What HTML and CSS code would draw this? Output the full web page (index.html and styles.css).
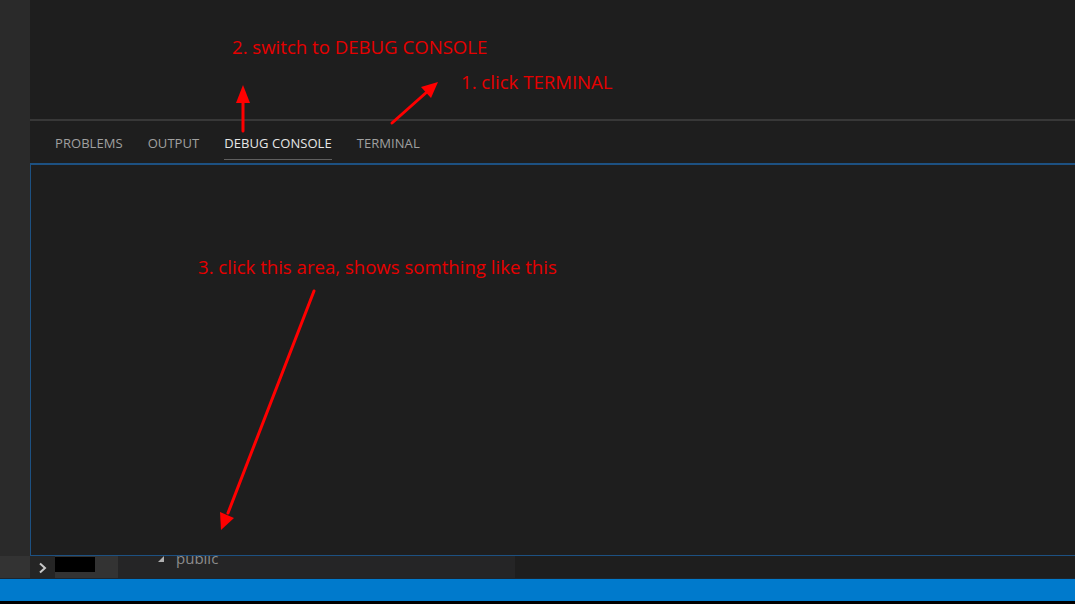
FILE: index.html
```html
<!DOCTYPE html>
<html>
<head>
    <link rel="stylesheet" href="styles.css">
</head>
<body>
    <div class="workbench">
        <div class="main">
            <div class="activitybar"></div>
            <div class="content">
                <div class="editor"></div>
                <div class="panel">
                    <div class="panel-tabs">
                        <span class="tab">Problems</span>
                        <span class="tab">Output</span>
                        <span class="tab active">Debug Console</span>
                        <span class="tab">Terminal</span>
                    </div>
                    <div class="debug-console"></div>
                </div>
            </div>
        </div>

        <div class="bottom-row">
            <div class="side-strip"></div>
            <div class="toggle">
                <svg width="10" height="12" viewBox="0 0 10 12">
                    <polyline points="2,1.5 7,6 2,10.5" fill="none" stroke="#c8c8c8" stroke-width="2"/>
                </svg>
            </div>
            <div class="tool-block"><div class="black-box"></div></div>
            <div class="explorer">
                <svg class="twisty" width="6" height="6" viewBox="0 0 6 6">
                    <polygon points="6,0 6,6 0,6" fill="#b0b0b0"/>
                </svg>
                <span class="folder">public</span>
            </div>
            <div class="rest"></div>
        </div>

        <div class="statusbar"></div>
        <div class="taskbar"></div>

        <!-- notes drawn over the screenshot -->
        <div class="note note-switch">2. switch to DEBUG CONSOLE</div>
        <div class="note note-terminal">1. click TERMINAL</div>
        <div class="note note-area">3. click this area, shows somthing like this</div>

        <svg class="arrows" width="1075" height="604" viewBox="0 0 1075 604">
            <g stroke="#f00" stroke-width="3" stroke-linecap="round" fill="#f00">
                <line x1="243" y1="131" x2="243" y2="98"/>
                <polygon points="243,85 250,103 236,103" stroke="none"/>

                <line x1="392" y1="123" x2="428" y2="91"/>
                <polygon points="438,82 431,98 421,87" stroke="none"/>

                <line x1="314" y1="291" x2="228" y2="513"/>
                <polygon points="221,530 234,518 220,512" stroke="none"/>
            </g>
        </svg>
    </div>
</body>
</html>
```

FILE: styles.css
```css
body {
    margin: 0;
    padding: 0;
    background-color: #1e1e1e;
    font-family: 'Open Sans', 'Noto Sans', sans-serif;
    overflow: hidden;
}
.workbench {
    position: relative;
    width: 1075px;
    height: 604px;
    display: flex;
    flex-direction: column;
}
.main {
    height: 556px;
    display: flex;
}
.activitybar {
    width: 30px;
    background-color: #2a2a2a;
}
.content {
    flex: 1;
    display: flex;
    flex-direction: column;
    background-color: #1e1e1e;
}
.editor {
    height: 119px;
}
.panel {
    flex: 1;
    display: flex;
    flex-direction: column;
    border-top: 2px solid #383838;
}
.panel-tabs {
    height: 42px;
    display: flex;
    align-items: flex-start;
    gap: 25px;
    padding-left: 25px;
}
.tab {
    padding-top: 13px;
    padding-bottom: 7px;
    line-height: 18px;
    font-size: 13px;
    letter-spacing: 0.06px;
    text-transform: uppercase;
    color: #a0a0a0;
    border-bottom: 1px solid transparent;
}
.tab.active {
    color: #e6e6e6;
    border-bottom-color: #5f5f5f;
}
.debug-console {
    flex: 1;
    border: 1px solid #1d5182;
    border-top-width: 2px;
    border-right: none;
}
.bottom-row {
    height: 22px;
    display: flex;
    overflow: hidden;
    border-bottom: 1px solid #1b2530;
}
.side-strip {
    width: 30px;
    background-color: #333333;
}
.toggle {
    width: 25px;
    background-color: #252525;
    display: flex;
    justify-content: center;
    padding-top: 6px;
    box-sizing: border-box;
}
.tool-block {
    width: 63px;
    background-color: #333333;
    padding-top: 1px;
}
.black-box {
    width: 40px;
    height: 15px;
    background-color: #000;
}
.explorer {
    width: 397px;
    background-color: #252526;
    display: flex;
    align-items: flex-start;
    padding-left: 40px;
    box-sizing: border-box;
}
.twisty {
    margin-right: 12px;
}
.folder {
    margin-top: -8px;
    font-size: 15px;
    line-height: 20px;
    color: #8c8c8c;
}
.rest {
    flex: 1;
    background-color: #1e1e1e;
}
.statusbar {
    height: 22px;
    background-color: #007acc;
}
.taskbar {
    flex: 1;
    background-color: #000;
}
.note {
    position: absolute;
    font-size: 18.6px;
    line-height: 18px;
    color: #e60000;
    white-space: nowrap;
}
.note-switch {
    left: 232px;
    top: 38px;
}
.note-terminal {
    left: 461px;
    top: 73px;
}
.note-area {
    left: 198px;
    top: 258px;
}
.arrows {
    position: absolute;
    left: 0;
    top: 0;
    pointer-events: none;
}
```
